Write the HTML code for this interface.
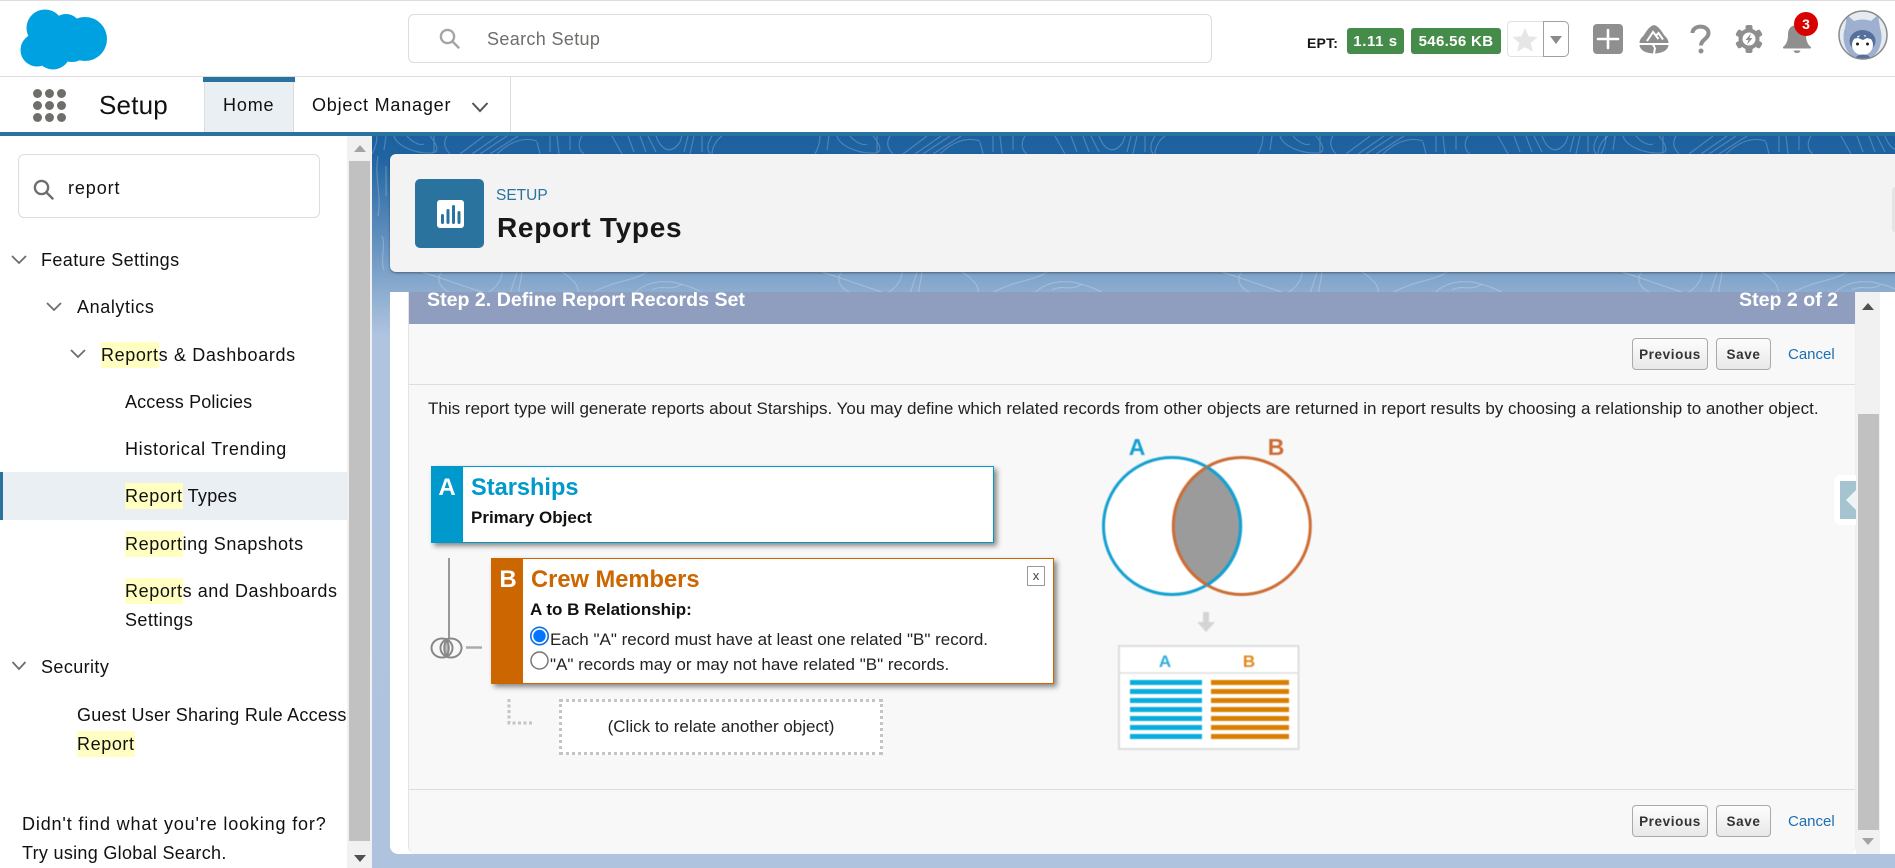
<!DOCTYPE html>
<html lang="en"><head><meta charset="utf-8"><title>Report Types</title>
<style>
html,body{margin:0;padding:0;width:1895px;height:868px;overflow:hidden;background:#fff;font-family:"Liberation Sans",sans-serif;color:#181818}
.a{position:absolute}
.t{position:absolute;white-space:nowrap;height:26px;line-height:26px}
.nav{font-size:18px;letter-spacing:.3px;color:#111}
mark{background:#ffffc2;color:inherit;padding:0;display:inline-block;height:26px;line-height:26px;letter-spacing:.6px}
.btn{position:absolute;box-sizing:border-box;height:32px;border:1px solid #aaa;border-radius:4px;background:linear-gradient(#fdfdfd,#e8e8e8);font:bold 13.5px/32px "Liberation Sans",sans-serif;letter-spacing:.6px;color:#333;text-align:center}
.lnk{position:absolute;color:#1b6fb5;font-size:15px;line-height:20px;white-space:nowrap}
.b{font-family:"Liberation Sans",sans-serif}
</style></head><body>

<!-- top header -->
<div class="a" style="left:0;top:0;width:1895px;height:1px;background:#ddd"></div>
<div class="a" style="left:0;top:76px;width:1895px;height:1px;background:#ddd"></div>
<svg class="a" style="left:20px;top:9px" width="88" height="61" viewBox="0 0 88 61"><g fill="#00a1e0"><circle cx="25" cy="19" r="18.5"/><circle cx="46" cy="20" r="15"/><circle cx="65" cy="30" r="22"/><circle cx="17" cy="41" r="16.5"/><circle cx="33" cy="43" r="17.5"/><circle cx="52" cy="36" r="17"/></g></svg>
<div class="a" style="left:408px;top:14px;width:804px;height:49px;box-sizing:border-box;border:1px solid #ddd;border-radius:6px;background:#fff"></div>
<svg class="a" style="left:439px;top:28px" width="21" height="21" viewBox="0 0 21 21" fill="none" stroke="#a5a5a5" stroke-width="2.4"><circle cx="8.5" cy="8.5" r="6.6"/><path d="M13.5 13.5L19.5 19.5" stroke-linecap="round"/></svg>
<div class="t" style="left:487px;top:26px;font-size:18px;letter-spacing:.35px;color:#706e6b">Search Setup</div>

<div class="t b" style="left:1307px;top:30px;font-size:14px;font-weight:bold;letter-spacing:.2px;color:#181818">EPT:</div>
<div class="a b" style="left:1347px;top:28px;width:57px;height:26px;border-radius:3px;background:#458b4a;color:#fff;font-size:15px;font-weight:bold;letter-spacing:.6px;line-height:27px;text-align:center">1.11 s</div>
<div class="a b" style="left:1411px;top:28px;width:90px;height:26px;border-radius:3px;background:#458b4a;color:#fff;font-size:15px;font-weight:bold;letter-spacing:.35px;line-height:27px;text-align:center">546.56 KB</div>
<div class="a" style="left:1507px;top:21px;width:37px;height:36px;box-sizing:border-box;border:1px solid #e2e2e2;border-right:0;border-radius:4px 0 0 4px"></div>
<div class="a" style="left:1543px;top:21px;width:26px;height:36px;box-sizing:border-box;border:1px solid #a0a0a0;border-radius:0 5px 5px 0"></div>
<svg class="a" style="left:1512px;top:27px" width="26" height="26" viewBox="0 0 26 26"><path d="M13 1l3.6 8.2 9 .8-6.8 6 2 8.8L13 20.2 5.2 24.8l2-8.8L.4 10l9-.8z" fill="#e6e6e6"/></svg>
<svg class="a" style="left:1549px;top:35px" width="14" height="10" viewBox="0 0 14 10"><path d="M1 1h12L7 9z" fill="#8a8a8a"/></svg>

<svg class="a" style="left:1593px;top:24px" width="30" height="30" viewBox="0 0 30 30"><rect width="30" height="30" rx="4" fill="#8f8f8f"/><path d="M15 6v18M5 15h20" stroke="#fff" stroke-width="2.6" stroke-linecap="round"/></svg>
<svg class="a" style="left:1639px;top:25px" width="30" height="30" viewBox="0 0 30 30"><path d="M15 0C11 1 8 5 5 10 2 13 .5 15 .5 18H29.5C29.5 15 28 13 25 10 22 5 19 1 15 0Z" fill="#8f8f8f"/><path d="M8 16L14 7l5.500 7M16.500 11l3-3 4.500 6.500" fill="none" stroke="#fff" stroke-width="2"/><path d="M.5 20H13l2 3-1 5.500C6 28 1 25 .5 20ZM17 20H29.5C29 25 24 28 16 28.500l1-5-1.500-3.500z" fill="#8f8f8f"/></svg>
<svg class="a" style="left:1690px;top:24px" width="21" height="30" viewBox="0 0 21 30"><path d="M2.500 9C2.500 .5 18.500 .5 18.500 9c0 6-7.500 6.500-7.500 12.500" fill="none" stroke="#8f8f8f" stroke-width="4"/><circle cx="11" cy="27" r="2.500" fill="#8f8f8f"/></svg>
<svg class="a" style="left:1735px;top:25px" width="28" height="28" viewBox="0 0 28 28"><g fill="#8f8f8f"><circle cx="14" cy="14" r="10.500"/><rect x="10.500" y="0" width="7" height="28" rx="2"/><rect x="10.500" y="0" width="7" height="28" rx="2" transform="rotate(60 14 14)"/><rect x="10.500" y="0" width="7" height="28" rx="2" transform="rotate(120 14 14)"/></g><circle cx="14" cy="14" r="6.500" fill="#fff"/><path d="M16 8.500L10.500 15h3l-1.500 4.500L17.500 13h-3z" fill="#8f8f8f"/></svg>
<svg class="a" style="left:1783px;top:25px" width="28" height="28" viewBox="0 0 28 28"><path d="M14 0c-6 0-9 4-9 9 0 6-1 10-5 13-.5 .5 0 1.500 1 1.500h26c1 0 1.500-1 1-1.500-4-3-5-7-5-13 0-5-3-9-9-9z" fill="#8f8f8f"/><path d="M10.500 25.500h7c-.5 2-2 2.500-3.500 2.500s-3-.5-3.500-2.500z" fill="#8f8f8f"/></svg>
<div class="a b" style="left:1794px;top:12px;width:24px;height:24px;border-radius:50%;background:#d90000;color:#fff;font-size:14px;font-weight:bold;line-height:24px;text-align:center">3</div>
<svg class="a" style="left:1838px;top:10px" width="50" height="50" viewBox="0 0 50 50"><defs><clipPath id="av"><circle cx="25" cy="25" r="24"/></clipPath></defs><circle cx="25" cy="25" r="24" fill="#e6eaf1"/><g clip-path="url(#av)"><path d="M9 5l7 6c5-2 12-2 17 0l7-6 2 13c2 6 2 12 0 18-2 7-8 14-17 14S9 43 7 36c-2-6-2-12 0-18z" fill="#9db0d0"/><ellipse cx="24.500" cy="31" rx="13" ry="11" fill="#54709b"/><ellipse cx="24.500" cy="35" rx="10.500" ry="10" fill="#fff"/><path d="M14 29l4-4 2 3 4-5 3 4 3-3 6 6-7-2-4 2-5-2z" fill="#54709b"/><circle cx="19.500" cy="34" r="1.500" fill="#222"/><circle cx="29.500" cy="34" r="1.500" fill="#222"/><ellipse cx="25" cy="48" rx="7" ry="3.500" fill="#54709b"/></g><circle cx="25" cy="25" r="24" fill="none" stroke="#8a8a8a" stroke-width="1.500"/></svg>

<!-- nav bar -->
<svg class="a" style="left:33px;top:89px" width="33" height="33" viewBox="0 0 33 33"><g fill="#706e6b"><circle cx="4.500" cy="4.500" r="4.500"/><circle cx="16.500" cy="4.500" r="4.500"/><circle cx="28.500" cy="4.500" r="4.500"/><circle cx="4.500" cy="16.500" r="4.500"/><circle cx="16.500" cy="16.500" r="4.500"/><circle cx="28.500" cy="16.500" r="4.500"/><circle cx="4.500" cy="28.500" r="4.500"/><circle cx="16.500" cy="28.500" r="4.500"/><circle cx="28.500" cy="28.500" r="4.500"/></g></svg>
<div class="t" style="left:99px;top:91px;font-size:26px;height:28px;line-height:28px;letter-spacing:.2px;color:#111">Setup</div>
<div class="a" style="left:204px;top:77px;width:90px;height:55px;background:#e9eff3;box-sizing:border-box;border-left:1px solid #ddd;border-right:1px solid #ddd"></div>
<div class="a" style="left:203px;top:77px;width:92px;height:5px;background:#2a739e"></div>
<div class="t nav" style="left:223px;top:92px;letter-spacing:.85px">Home</div>
<div class="t nav" style="left:312px;top:92px;letter-spacing:.8px">Object Manager</div>
<svg class="a" style="left:471px;top:101px" width="18" height="12" viewBox="0 0 18 12" fill="none" stroke="#555" stroke-width="2"><path d="M1.500 2L9 10l7.500-8"/></svg>
<div class="a" style="left:510px;top:77px;width:1px;height:55px;background:#ddd"></div>
<div class="a" style="left:0;top:132px;width:1895px;height:4px;background:#2a739e"></div>

<!-- main background -->
<div class="a" style="left:372px;top:136px;width:1523px;height:732px;background:linear-gradient(#1c609f 0,#1f63a1 20px,#b0c4df 200px,#b0c3de 100%)"></div>
<svg class="a" style="left:372px;top:136px" width="1523" height="160" viewBox="0 0 1523 160" fill="none" stroke="#fff" stroke-opacity=".22" stroke-width="1.200">
<defs><g id="top"><path d="M5 0C5 8 2 14 0 18M14 0L12 14M22 0C24 8 40 18 60 17 72 16 58 0 58 0M35 0C40 6 48 10 52 8M62 0L62 16M75 0C70 8 74 14 78 18M88 18L112 0M100 18L126 0M108 18L135 0M118 18L146 0M125 18C135 8 150 0 165 5M165 6L168 18M178 0L178 16M185 0L187 18M198 0V14M210 0C206 6 206 14 212 18M240 0L250 18M256 0L262 16M268 0L274 16M276 0L284 16M284 0C290 16 300 18 308 6L310 0M316 0L312 16M322 0L318 18M330 0V16M340 0C336 6 334 12 338 18M350 0C344 4 340 12 340 18"/></g>
<g id="bot"><path d="M70 0C60 10 75 24 90 22M50 0C70 6 85 12 110 20M130 0C130 10 120 20 112 22M145 0L138 22M150 0L146 24M190 0C200 6 210 16 205 24M215 24C240 8 260 10 275 0M260 24C268 14 280 8 300 10 320 14 330 20 335 24M280 18C290 12 298 20 310 12 320 20M340 0L352 24M350 0L358 24M375 0C385 8 400 12 410 8"/></g></defs>
<use href="#top"/><use href="#top" x="443"/><use href="#top" x="886"/><use href="#top" x="1229"/>
<g transform="translate(0,136)"><use href="#bot"/><use href="#bot" x="400"/><use href="#bot" x="800"/><use href="#bot" x="1200"/></g>
<path d="M6 20C2 40 10 60 6 80M14 30V60M10 100C14 110 8 125 12 134"/>
</svg>

<!-- left panel -->
<div class="a" style="left:0;top:136px;width:347px;height:732px;background:#fff"></div>
<div class="a" style="left:18px;top:154px;width:302px;height:64px;box-sizing:border-box;border:1px solid #ddd;border-radius:6px"></div>
<svg class="a" style="left:33px;top:179px" width="21" height="21" viewBox="0 0 21 21" fill="none" stroke="#706e6b" stroke-width="2.400"><circle cx="8.500" cy="8.500" r="6.600"/><path d="M13.500 13.500L19.500 19.500" stroke-linecap="round"/></svg>
<div class="t nav" style="left:68px;top:175px;letter-spacing:.9px">report</div>

<div class="a" style="left:0;top:472px;width:347px;height:48px;background:#e9eff3"></div>
<div class="a" style="left:0;top:472px;width:3px;height:48px;background:#2a739e"></div>

<div class="t nav" style="left:41px;top:247px;letter-spacing:.4px">Feature Settings</div>
<div class="t nav" style="left:77px;top:294px;letter-spacing:.6px">Analytics</div>
<div class="t nav" style="left:101px;top:342px;letter-spacing:.65px"><mark>Report</mark>s &amp; Dashboards</div>
<div class="t nav" style="left:125px;top:389px;letter-spacing:.15px">Access Policies</div>
<div class="t nav" style="left:125px;top:436px;letter-spacing:.68px">Historical Trending</div>
<div class="t nav" style="left:125px;top:483px"><mark>Report</mark> Types</div>
<div class="t nav" style="left:125px;top:531px;letter-spacing:.53px"><mark>Report</mark>ing Snapshots</div>
<div class="t nav" style="left:125px;top:578px;letter-spacing:.55px"><mark>Report</mark>s and Dashboards</div>
<div class="t nav" style="left:125px;top:607px;letter-spacing:.4px">Settings</div>
<div class="t nav" style="left:41px;top:654px;letter-spacing:.4px">Security</div>
<div class="t nav" style="left:77px;top:702px;letter-spacing:.25px">Guest User Sharing Rule Access</div>
<div class="t nav" style="left:77px;top:731px"><mark>Report</mark></div>
<div class="t nav" style="left:22px;top:811px;letter-spacing:.85px">Didn't find what you're looking for?</div>
<div class="t nav" style="left:22px;top:840px">Try using Global Search.</div>
<svg class="a" style="left:0;top:250px" width="100" height="120" viewBox="0 0 100 120" fill="none" stroke="#706e6b" stroke-width="1.800"><path d="M12 6l7 7 7-7M47 53l7 7 7-7M71 100l7 7 7-7"/></svg>
<svg class="a" style="left:11px;top:660px" width="18" height="12" viewBox="0 0 18 12" fill="none" stroke="#706e6b" stroke-width="1.800"><path d="M1.500 2L8 9l6.500-7"/></svg>

<!-- left scrollbar -->
<div class="a" style="left:347px;top:136px;width:25px;height:732px;background:#f1f1f1"></div>
<div class="a" style="left:349px;top:161px;width:21px;height:680px;background:#c1c1c1"></div>
<svg class="a" style="left:353px;top:144px" width="14" height="9" viewBox="0 0 14 9"><path d="M1 8h12L7 1z" fill="#a3a3a3"/></svg>
<svg class="a" style="left:353px;top:854px" width="14" height="9" viewBox="0 0 14 9"><path d="M1 1h12L7 8z" fill="#505050"/></svg>

<!-- page header card -->
<div class="a" style="left:390px;top:154px;width:1520px;height:118px;background:#f3f3f3;border-radius:6px;box-shadow:0 1px 2px rgba(0,0,0,.4)"></div>
<div class="a" style="left:415px;top:179px;width:69px;height:69px;background:#2a739e;border-radius:5px"></div>
<svg class="a" style="left:437px;top:200px" width="27" height="28" viewBox="0 0 27 28"><rect width="27" height="28" rx="3" fill="#fff"/><g fill="#2a739e"><rect x="4" y="14" width="3" height="10" rx="1.500"/><rect x="9.500" y="9" width="3" height="15" rx="1.500"/><rect x="15" y="5" width="3" height="19" rx="1.500"/><rect x="20.500" y="11" width="3" height="13" rx="1.500"/></g></svg>
<div class="t" style="left:496px;top:183px;font-size:15.5px;color:#2a739e">SETUP</div>
<div class="t" style="left:497px;top:212px;font-size:28px;font-weight:bold;height:32px;line-height:32px;letter-spacing:.7px;color:#181818">Report Types</div>

<!-- content panel -->
<div class="a" style="left:390px;top:292px;width:1505px;height:562px;background:#fff;border-radius:0 0 0 8px"></div>
<div class="a" style="left:408px;top:292px;width:1448px;height:562px;box-sizing:border-box;background:#f8f8f8;border-left:1px solid #e4e4e4;border-right:1px solid #eee;border-radius:0 0 8px 8px;overflow:hidden">
  <div class="a" style="left:0;top:0;width:1448px;height:32px;background:#8f9dbe;overflow:hidden">
    <div class="t" style="left:18px;top:-5px;font-size:19.6px;font-weight:bold;color:#fff">Step 2. Define Report Records Set</div>
    <div class="t" style="left:1330px;top:-5px;font-size:19.6px;font-weight:bold;color:#fff">Step 2 of 2</div>
  </div>
  <div class="a" style="left:0;top:92px;width:1448px;height:1px;background:#ddd"></div>
  <div class="a" style="left:0;top:497px;width:1448px;height:1px;background:#ddd"></div>
</div>
<div class="btn" style="left:1632px;top:338px;width:76px">Previous</div>
<div class="btn" style="left:1716px;top:338px;width:55px">Save</div>
<div class="lnk" style="left:1788px;top:345px">Cancel</div>
<div class="btn" style="left:1632px;top:805px;width:76px">Previous</div>
<div class="btn" style="left:1716px;top:805px;width:55px">Save</div>
<div class="lnk" style="left:1788px;top:812px">Cancel</div>
<div class="t" style="left:428px;top:396px;font-size:17px;letter-spacing:.013px;color:#222">This report type will generate reports about Starships. You may define which related records from other objects are returned in report results by choosing a relationship to another object.</div>

<!-- A box -->
<div class="a" style="left:431px;top:466px;width:563px;height:77px;box-sizing:border-box;background:#fff;border:1px solid #0099cc;box-shadow:3px 3px 5px #888"></div>
<div class="a" style="left:431px;top:466px;width:32px;height:77px;background:#0099cc"></div>
<div class="t" style="left:431px;top:475px;width:32px;text-align:center;font-size:24px;font-weight:bold;color:#fff">A</div>
<div class="t" style="left:471px;top:475px;font-size:23.6px;font-weight:bold;color:#0099cc">Starships</div>
<div class="t" style="left:471px;top:505px;font-size:17px;font-weight:bold;color:#111">Primary Object</div>

<!-- connector -->
<div class="a" style="left:448px;top:558px;width:2px;height:80px;background:#999"></div>
<svg class="a" style="left:430px;top:637px" width="54" height="24" viewBox="0 0 54 24" fill="none" stroke="#888" stroke-width="2"><ellipse cx="12" cy="11" rx="10.500" ry="9.500"/><ellipse cx="21" cy="11" rx="10.500" ry="9.500"/><path d="M16.500 3.500c3 4 3 11 0 15-3-4-3-11 0-15z" fill="#bbb"/><path d="M36 10.500h16" stroke="#aaa" stroke-width="2.500"/></svg>
<svg class="a" style="left:506px;top:697px" width="28" height="30" viewBox="0 0 28 30" fill="none" stroke="#c4c4c4" stroke-width="3" stroke-dasharray="3 2.500"><path d="M3 2V26H26"/></svg>

<!-- B box -->
<div class="a" style="left:491px;top:558px;width:563px;height:126px;box-sizing:border-box;background:#fff;border:1px solid #cc6600;box-shadow:3px 3px 5px #888"></div>
<div class="a" style="left:491px;top:558px;width:32px;height:126px;background:#cc6600"></div>
<div class="t" style="left:492px;top:567px;width:32px;text-align:center;font-size:24px;font-weight:bold;color:#fff">B</div>
<div class="t" style="left:531px;top:567px;font-size:23.7px;font-weight:bold;color:#cc6600">Crew Members</div>
<div class="t" style="left:530px;top:597px;font-size:17px;font-weight:bold;color:#111">A to B Relationship:</div>
<div class="a" style="left:1027px;top:566px;width:18px;height:20px;box-sizing:border-box;border:1px solid #999;text-align:center;font-size:13px;line-height:18px;color:#444">x</div>
<svg class="a" style="left:530px;top:626px" width="20" height="44" viewBox="0 0 20 44"><circle cx="9.500" cy="10" r="8.700" fill="#fff" stroke="#0b6fdc" stroke-width="1.600"/><circle cx="9.500" cy="10" r="6.200" fill="#0075ff"/><circle cx="9.500" cy="34.500" r="8.500" fill="#fff" stroke="#777" stroke-width="1.500"/></svg>
<div class="t" style="left:550px;top:627px;font-size:17px;color:#222">Each "A" record must have at least one related "B" record.</div>
<div class="t" style="left:550px;top:652px;font-size:17px;color:#222">"A" records may or may not have related "B" records.</div>

<!-- dotted box -->
<div class="a" style="left:559px;top:699px;width:324px;height:56px;box-sizing:border-box;background:#fff;border:3px dotted #c4c4c4"></div>
<div class="t" style="left:559px;top:714px;width:324px;text-align:center;font-size:17px;color:#222">(Click to relate another object)</div>

<!-- venn -->
<svg class="a" style="left:1090px;top:430px" width="230" height="330" viewBox="1090 430 230 330">
<g style="filter:blur(.4px)">
<circle cx="1172" cy="526" r="68.500" fill="#fff"/><circle cx="1242" cy="526" r="68.500" fill="#fff"/>
<path d="M1207 467A68.500 68.500 0 0 0 1207 585A68.500 68.500 0 0 0 1207 467Z" fill="#9b9b9b"/>
<circle cx="1172" cy="526" r="68.500" fill="none" stroke="#13a0d0" stroke-width="3"/>
<path d="M1207 467A68.500 68.500 0 1 1 1207 585A68.500 68.500 0 0 1 1207 467Z" fill="none" stroke="#cb6c33" stroke-width="3"/>
<path d="M1207 467A68.500 68.500 0 0 1 1207 585" fill="none" stroke="#13a0d0" stroke-width="3"/>
<text x="1137" y="455" font-family="Liberation Sans,sans-serif" font-size="23" font-weight="bold" fill="#13a0d0" text-anchor="middle">A</text>
<text x="1276" y="455" font-family="Liberation Sans,sans-serif" font-size="23" font-weight="bold" fill="#cb6c33" text-anchor="middle">B</text>
<path d="M1203 612h6v10h6l-9 10-9-10h6z" fill="#d4d4d4"/>
<rect x="1119" y="646" width="179.500" height="103" fill="#fff" stroke="#ddd" stroke-width="2"/>
<path d="M1119 673h180" stroke="#ddd" stroke-width="1.500"/>
<text x="1165" y="667" font-family="Liberation Sans,sans-serif" font-size="17" font-weight="bold" fill="#2caedc" text-anchor="middle">A</text>
<text x="1249" y="667" font-family="Liberation Sans,sans-serif" font-size="17" font-weight="bold" fill="#e08a1c" text-anchor="middle">B</text>
<g fill="#09acdc"><rect x="1130" y="680" width="72" height="5"/><rect x="1130" y="689" width="72" height="5"/><rect x="1130" y="698" width="72" height="5"/><rect x="1130" y="707" width="72" height="5"/><rect x="1130" y="716" width="72" height="5"/><rect x="1130" y="725" width="72" height="5"/><rect x="1130" y="734" width="72" height="5"/></g>
<g fill="#d97f00"><rect x="1211" y="680" width="78" height="5"/><rect x="1211" y="689" width="78" height="5"/><rect x="1211" y="698" width="78" height="5"/><rect x="1211" y="707" width="78" height="5"/><rect x="1211" y="716" width="78" height="5"/><rect x="1211" y="725" width="78" height="5"/><rect x="1211" y="734" width="78" height="5"/></g>
</g></svg>

<!-- side tab -->
<div class="a" style="left:1834px;top:475px;width:22px;height:50px;background:#fff;border-radius:7px 0 0 7px"></div>
<div class="a" style="left:1840px;top:481px;width:16px;height:38px;background:#a6c4d0"></div>
<svg class="a" style="left:1846px;top:490px" width="10" height="20" viewBox="0 0 10 20"><path d="M10 0L0 10l10 10z" fill="#eef3f5"/></svg>

<!-- right scrollbar -->
<div class="a" style="left:1856px;top:292px;width:24px;height:562px;background:#f1f1f1"></div>
<div class="a" style="left:1858px;top:414px;width:21px;height:416px;background:#c1c1c1"></div>
<svg class="a" style="left:1862px;top:302px" width="12" height="8" viewBox="0 0 12 8"><path d="M0 8h12L6 1z" fill="#505050"/></svg>
<svg class="a" style="left:1862px;top:838px" width="12" height="8" viewBox="0 0 12 8"><path d="M0 0h12L6 7z" fill="#a3a3a3"/></svg>
<div class="a" style="left:1892px;top:187px;width:3px;height:45px;background:#e4e4e4;border-radius:3px 0 0 3px"></div>
</body></html>
